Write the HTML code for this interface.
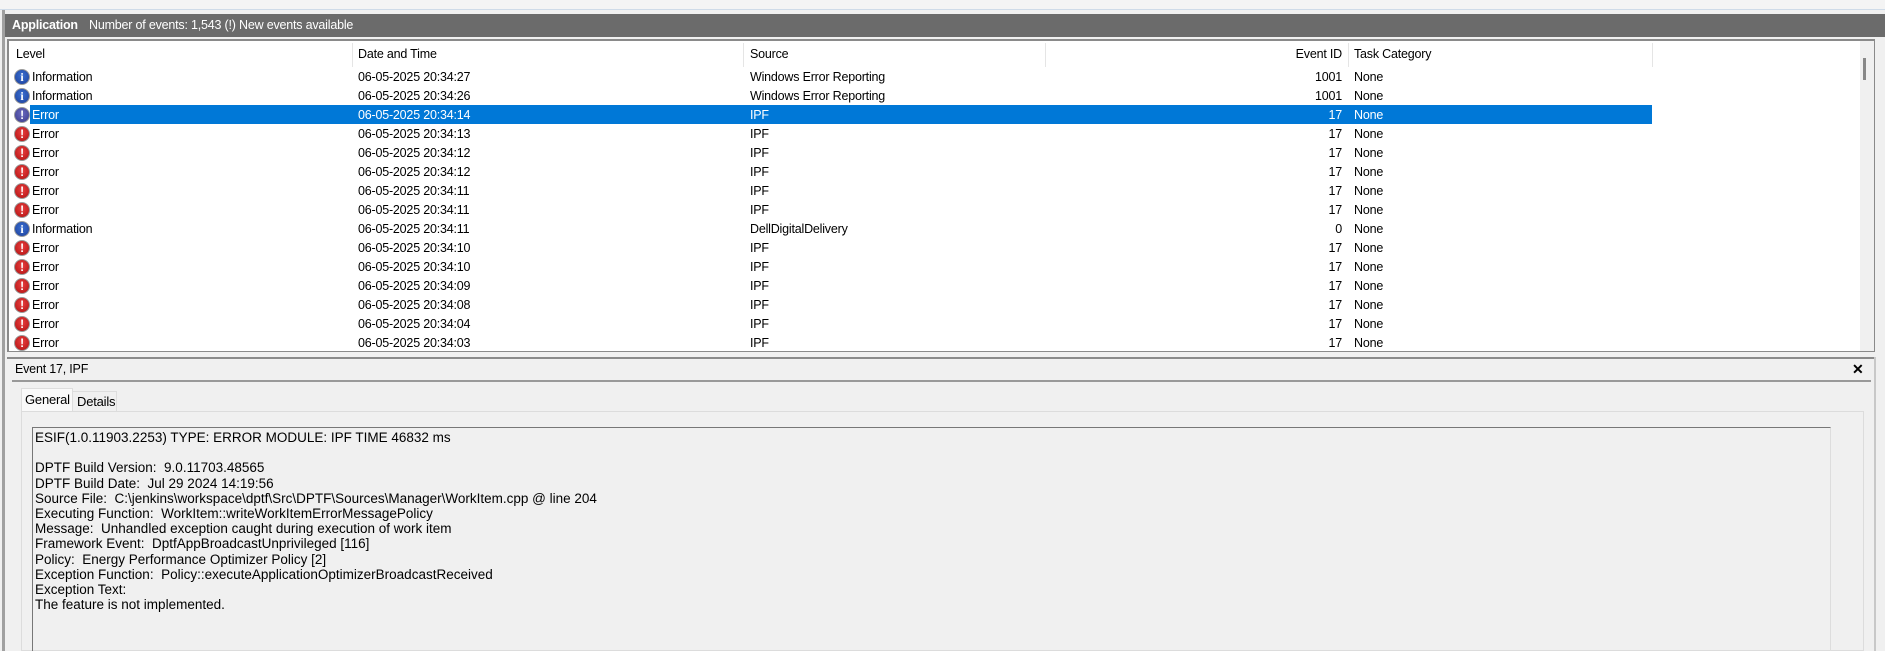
<!DOCTYPE html>
<html><head><meta charset="utf-8"><style>
*{margin:0;padding:0;box-sizing:border-box}
body{width:1885px;height:651px;overflow:hidden;background:#f0f0f0;font-family:"Liberation Sans",sans-serif;font-size:12.5px;color:#000;position:relative;letter-spacing:-0.2px}
.a{position:absolute}
.row{position:absolute;left:10px;height:19px;width:1642px}
.row span{position:absolute;top:3px;white-space:nowrap}
.sel{background:#0078d7;color:#fff}
.ic{position:absolute;left:4px;top:2px;width:16px;height:16px;border-radius:50%;color:#fff;font-weight:bold;font-size:12px;text-align:center;line-height:15px;font-family:"Liberation Serif",serif}
.info{background:radial-gradient(circle at 50% 40%,#3a6fd0,#1c3f9a);border:1.5px solid #9a9a9a}
.err{background:radial-gradient(circle at 50% 40%,#e84040,#b01010);border:1.5px solid #9a9a9a;font-family:"Liberation Sans",sans-serif}
.errs{background:radial-gradient(circle at 50% 40%,#6a6ac0,#3a3a8a);border:1.5px solid #9a9a9a;font-family:"Liberation Sans",sans-serif}
.txt div{height:15.2px;line-height:15.2px;white-space:nowrap;font-size:13.5px;letter-spacing:0}
</style></head><body>
<div class="a" style="left:0;top:0;width:1885px;height:10px;background:#f4f4f4;border-bottom:1px solid #cfdbe8"></div>
<div class="a" style="left:2px;top:10px;width:3px;height:641px;background:#a0a0a0"></div>
<div class="a" style="left:5px;top:14px;width:1880px;height:23px;background:#6b6b6b;color:#fff"><span class="a" style="left:7px;top:4px;font-weight:bold;font-size:12.5px">Application</span><span class="a" style="left:84px;top:4px;font-size:12.5px">Number of events: 1,543 (!) New events available</span></div>
<div class="a" style="left:7px;top:39px;width:1868px;height:313px;background:#fff;border:2px solid #8a8a8a;border-right-width:1px;border-bottom-width:1px"></div>
<div class="a" style="left:1860px;top:41px;width:14px;height:310px;background:#f0f0f0"></div>
<div class="a" style="left:1863px;top:58px;width:3px;height:22px;background:#888"></div>
<div class="a" style="left:16px;top:47px">Level</div>
<div class="a" style="left:352px;top:43px;width:1px;height:24px;background:#e5e5e5"></div>
<div class="a" style="left:358px;top:47px">Date and Time</div>
<div class="a" style="left:743px;top:43px;width:1px;height:24px;background:#e5e5e5"></div>
<div class="a" style="left:750px;top:47px">Source</div>
<div class="a" style="left:1045px;top:43px;width:1px;height:24px;background:#e5e5e5"></div>
<div class="a" style="left:1260px;top:47px;width:82px;text-align:right">Event ID</div>
<div class="a" style="left:1348px;top:43px;width:1px;height:24px;background:#e5e5e5"></div>
<div class="a" style="left:1354px;top:47px">Task Category</div>
<div class="a" style="left:1652px;top:43px;width:1px;height:24px;background:#e5e5e5"></div>
<div id="rows"></div>
<script>
var d=[["i","Information","06-05-2025 20:34:27","Windows Error Reporting","1001"],["i","Information","06-05-2025 20:34:26","Windows Error Reporting","1001"],["s","Error","06-05-2025 20:34:14","IPF","17"],["e","Error","06-05-2025 20:34:13","IPF","17"],["e","Error","06-05-2025 20:34:12","IPF","17"],["e","Error","06-05-2025 20:34:12","IPF","17"],["e","Error","06-05-2025 20:34:11","IPF","17"],["e","Error","06-05-2025 20:34:11","IPF","17"],["i","Information","06-05-2025 20:34:11","DellDigitalDelivery","0"],["e","Error","06-05-2025 20:34:10","IPF","17"],["e","Error","06-05-2025 20:34:10","IPF","17"],["e","Error","06-05-2025 20:34:09","IPF","17"],["e","Error","06-05-2025 20:34:08","IPF","17"],["e","Error","06-05-2025 20:34:04","IPF","17"],["e","Error","06-05-2025 20:34:03","IPF","17"]];
var h="";d.forEach(function(r,k){var t=67+k*19;var ic=r[0]=="i"?'<div class="ic info">i</div>':(r[0]=="s"?'<div class="ic errs">!</div>':'<div class="ic err">!</div>');
h+='<div class="row" style="top:'+t+'px">'+(r[0]=="s"?'<div class="sel" style="position:absolute;left:20px;top:0;width:1622px;height:19px"></div>':'')+ic+'<span style="left:22px'+(r[0]=="s"?';color:#fff':'')+'">'+r[1]+'</span><span style="left:348px'+(r[0]=="s"?';color:#fff':'')+'">'+r[2]+'</span><span style="left:740px'+(r[0]=="s"?';color:#fff':'')+'">'+r[3]+'</span><span style="left:1250px;width:82px;text-align:right'+(r[0]=="s"?';color:#fff':'')+'">'+r[4]+'</span><span style="left:1344px'+(r[0]=="s"?';color:#fff':'')+'">None</span></div>';});
document.getElementById("rows").innerHTML=h;
</script>
<div class="a" style="left:7px;top:357px;width:1868px;height:2px;background:#8a8a8a"></div>
<div class="a" style="left:1874px;top:357px;width:2px;height:294px;background:#c8c8c8"></div>
<div class="a" style="left:15px;top:362px;font-size:12.5px">Event 17, IPF</div>
<div class="a" style="left:1852px;top:361px;font-weight:bold;font-size:14px">✕</div>
<div class="a" style="left:12px;top:380px;width:1859px;height:2px;background:#999"></div>
<div class="a" style="left:21px;top:388px;width:52px;height:24px;background:#f9f9f9;border:1px solid #ddd;border-bottom:none"></div>
<div class="a" style="left:25px;top:392px;font-size:13px">General</div>
<div class="a" style="left:72px;top:391px;width:45px;height:21px;background:#f0f0f0;border:1px solid #ddd;border-bottom:none"></div>
<div class="a" style="left:77px;top:394px;font-size:13px">Details</div>
<div class="a" style="left:21px;top:411px;width:1843px;height:240px;border:1px solid #dcdcdc;background:#f0f0f0"></div>
<div class="a" style="left:32px;top:427px;width:1799px;height:224px;border-top:1px solid #777;border-left:1px solid #777;border-right:1px solid #ddd"></div>
<div class="a txt" style="left:35px;top:430px">
<div>ESIF(1.0.11903.2253) TYPE: ERROR MODULE: IPF TIME 46832 ms</div>
<div>&nbsp;</div>
<div>DPTF Build Version:&nbsp; 9.0.11703.48565</div>
<div>DPTF Build Date:&nbsp; Jul 29 2024 14:19:56</div>
<div>Source File:&nbsp; C:\jenkins\workspace\dptf\Src\DPTF\Sources\Manager\WorkItem.cpp @ line 204</div>
<div>Executing Function:&nbsp; WorkItem::writeWorkItemErrorMessagePolicy</div>
<div>Message:&nbsp; Unhandled exception caught during execution of work item</div>
<div>Framework Event:&nbsp; DptfAppBroadcastUnprivileged [116]</div>
<div>Policy:&nbsp; Energy Performance Optimizer Policy [2]</div>
<div>Exception Function:&nbsp; Policy::executeApplicationOptimizerBroadcastReceived</div>
<div>Exception Text:</div>
<div>The feature is not implemented.</div>
</div>
</body></html>
